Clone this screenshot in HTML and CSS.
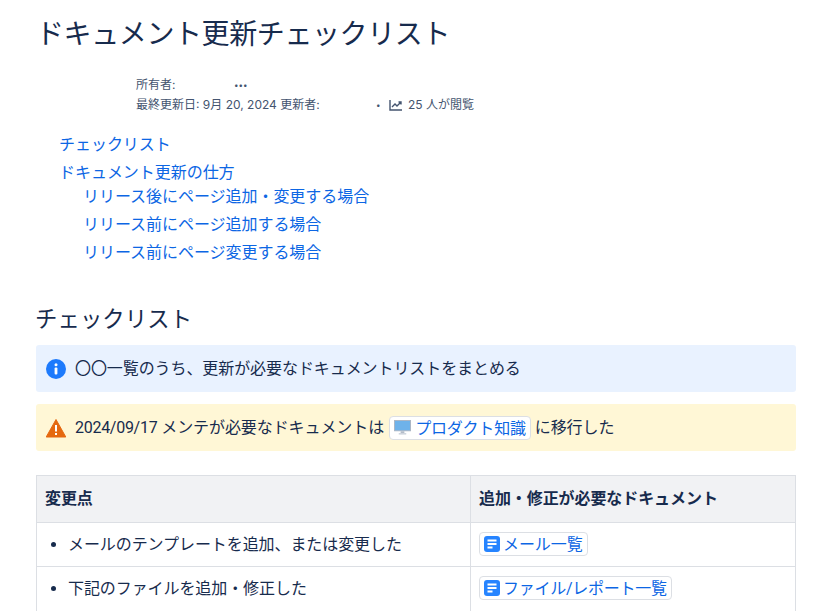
FILE: index.html
```html
<!DOCTYPE html>
<html lang="ja">
<head>
<meta charset="utf-8">
<title>ドキュメント更新チェックリスト</title>
<link rel="stylesheet" href="styles.css">
</head>
<body>
<main class="page">
  <h1 class="title">ドキュメント更新チェックリスト</h1>
  <div class="meta">
    <div class="meta-row"><span class="owner">所有者:</span><span class="dots">•••</span></div>
    <div class="meta-row"><span class="updated">最終更新日: 9月 20, 2024 更新者:</span><span class="sep">•</span>
      <svg class="chart" viewBox="0 0 14 12" width="14" height="12"><path d="M1 1v10h12" fill="none" stroke="#44546f" stroke-width="1.4"/><path d="M3 8l3-3 2 2 4-4M9.500 3H12v2.500" fill="none" stroke="#44546f" stroke-width="1.4"/></svg>
      <span>25 人が閲覧</span></div>
  </div>
  <nav class="toc">
    <a class="toc-1 first" href="#">チェックリスト</a>
    <a class="toc-1" href="#">ドキュメント更新の仕方</a>
    <a class="toc-2 tight" href="#">リリース後にページ追加・変更する場合</a>
    <a class="toc-2" href="#">リリース前にページ追加する場合</a>
    <a class="toc-2" href="#">リリース前にページ変更する場合</a>
  </nav>
  <h2 class="section">チェックリスト</h2>
  <div class="panel info">
    <svg class="panel-icon" viewBox="0 0 20 20" width="20" height="20"><circle cx="10" cy="10" r="10" fill="#1d7afc"/><circle cx="10" cy="5.800" r="1.500" fill="#fff"/><rect x="8.600" y="8.600" width="2.800" height="7" rx="1" fill="#fff"/></svg>
    <span class="panel-text">〇〇一覧のうち、更新が必要なドキュメントリストをまとめる</span>
  </div>
  <div class="panel warn">
    <svg class="panel-icon" viewBox="0 0 20 20" width="20" height="20"><path d="M10 1.500 19.800 19H.2z" fill="#e56910" stroke="#e56910" stroke-linejoin="round"/><rect x="9" y="7" width="2" height="6.500" fill="#fff"/><rect x="9" y="15" width="2" height="2" fill="#fff"/></svg>
    <span class="panel-text"><span class="date">2024/09/17</span> メンテが必要なドキュメントは</span>
    <a class="chip chip-page" href="#"><svg viewBox="0 0 18 16" width="17" height="15"><rect x="0.500" y="0.500" width="17" height="11" fill="#6eb2ea" stroke="#a9b4c2"/><rect x="7" y="12" width="4" height="2" fill="#b3bcc8"/><rect x="5" y="14" width="8" height="1.500" fill="#c9d0d9"/></svg><span class="chip-text">プロダクト知識</span></a>
    <span class="panel-text after-chip">に移行した</span>
  </div>
  <table class="grid">
    <colgroup><col class="col-a"><col class="col-b"></colgroup>
    <thead><tr><th><span class="cell-text">変更点</span></th><th><span class="cell-text">追加・修正が必要なドキュメント</span></th></tr></thead>
    <tbody>
      <tr><td><ul><li>メールのテンプレートを追加、または変更した</li></ul></td>
        <td><a class="chip" href="#"><svg viewBox="0 0 16 16" width="16" height="16"><rect width="16" height="16" rx="3" fill="#2684ff"/><path d="M3.500 4.500h9M3.500 8h9M3.500 11.500h5" stroke="#fff" stroke-width="1.800"/></svg><span class="chip-text">メール一覧</span></a></td></tr>
      <tr class="row-long"><td><ul><li>下記のファイルを追加・修正した</li></ul></td>
        <td><a class="chip chip-tight" href="#"><svg viewBox="0 0 16 16" width="16" height="16"><rect width="16" height="16" rx="3" fill="#2684ff"/><path d="M3.500 4.500h9M3.500 8h9M3.500 11.500h5" stroke="#fff" stroke-width="1.800"/></svg><span class="chip-text">ファイル/レポート一覧</span></a></td></tr>
    </tbody>
  </table>
</main>
</body>
</html>
```
FILE: styles.css
```css
html, body {
  margin: 0;
  padding: 0;
  height: 611px;
  overflow: hidden;
  background: #fff;
}
body {
  font-family: "Roboto", "Noto Sans CJK JP", sans-serif;
  color: #172b4d;
  font-size: 16px;
  letter-spacing: -0.08px;
}
.page {
  margin: 0 29px 0 36px;
  width: 760px;
}
.title {
  margin: 0;
  padding-top: 15px;
  font-size: 28px;
  letter-spacing: -0.4px;
  line-height: 40px;
  font-weight: 400;
  color: #172b4d;
}
.meta {
  margin: 20px 0 0 100px;
  font-family: "Inter", "Noto Sans CJK JP", sans-serif;
  letter-spacing: 0;
  font-size: 12px;
  line-height: 20px;
  color: #44546f;
}
.meta-row {
  display: flex;
  align-items: center;
  height: 20px;
}
.owner { width: 98px; }
.dots { font-size: 8px; letter-spacing: 0; }
.updated { width: 240px; }
.sep { font-size: 8px; width: 13px; }
.chart { margin-right: 5px; }
.toc {
  display: flex;
  flex-direction: column;
  margin-top: 16px;
  padding-left: 23px;
  letter-spacing: -0.04px;
}
.toc a {
  color: #0c66e4;
  text-decoration: none;
  line-height: 28px;
  font-size: 16px;
}
.toc-2 { margin-left: 24px; }
.toc .tight { margin-top: -4px; }
.section {
  margin: 34px 0 0 -1px;
  font-size: 22.4px;
  letter-spacing: 0.05px;
  line-height: 36px;
  font-weight: 400;
}
.panel {
  display: flex;
  align-items: center;
  gap: 5px;
  box-sizing: border-box;
  border-radius: 3px;
  padding: 0 10px;
}
.panel-icon { margin-right: 4px; flex: none; }
.panel-text { padding-bottom: 4px; }
.date { letter-spacing: -0.28px; }
.after-chip { margin-left: -1px; }
.info {
  margin-top: 8px;
  height: 47px;
  background: #e9f2ff;
}
.warn {
  margin-top: 12px;
  height: 47px;
  background: #fff7d6;
}
.chip {
  display: inline-flex;
  align-items: center;
  gap: 3px;
  box-sizing: border-box;
  height: 24px;
  padding: 0 4px;
  background: #fff;
  border: 1px solid #dcdfe4;
  border-radius: 4px;
  color: #0c66e4;
  text-decoration: none;
  font-size: 16px;
  white-space: nowrap;
}
.chip-text { padding-bottom: 2px; }
.chip-page { gap: 4px; letter-spacing: -0.2px; }
.chip-tight { letter-spacing: -0.25px; }
.grid {
  margin-top: 24px;
  width: 759px;
  border-collapse: collapse;
  table-layout: fixed;
}
.col-a { width: 434px; }
.col-b { width: 325px; }
.grid th, .grid td {
  border: 1px solid #dcdfe4;
  padding: 0 8px;
  text-align: left;
}
.grid th {
  background: #f1f2f4;
  height: 46px;
  font-size: 16px;
  font-weight: 700;
}
.cell-text { position: relative; top: -2px; }
.grid td { height: 41px; padding-bottom: 2px; }
.grid ul { margin: 0; padding-left: 23px; }
.grid li { padding-bottom: 2px; }
.grid .row-long td {
  height: 34px;
  vertical-align: top;
  padding-top: 9px;
  border-bottom: none;
}
.row-long ul { margin-top: -1px; }
```
